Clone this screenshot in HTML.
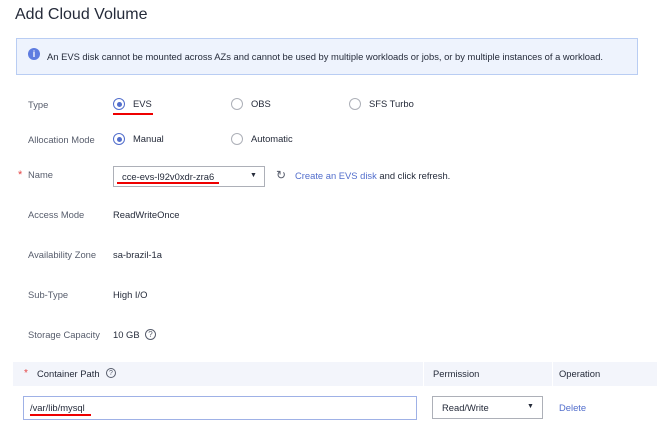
<!DOCTYPE html>
<html><head><style>
body{margin:0;width:657px;height:429px;background:#fff;font-family:"Liberation Sans",sans-serif;color:#252b3a;position:relative;overflow:hidden}
.a{position:absolute;white-space:nowrap}
.l{font-size:9.4px;color:#575d6c}
.v{font-size:9.4px;color:#252b3a}
.r{width:12px;height:12px;border:1px solid #adb0b8;border-radius:50%;box-sizing:border-box}
.rs{border-color:#526ecc}
.rs::after{content:"";position:absolute;left:2.5px;top:2.5px;width:5px;height:5px;border-radius:50%;background:#526ecc}
.red{background:#e00;height:2px}
</style></head><body>
<div class="a" style="left:15px;top:6px;font-size:16px;color:#252b3a">Add Cloud Volume</div>
<div class="a" style="left:16px;top:38px;width:622px;height:37px;background:#eef3fd;border:1px solid #b9cdf3;box-sizing:border-box"></div>
<div class="a" style="left:28px;top:48px;width:12px;height:12px;border-radius:50%;background:#5e7ce0;color:#fff;font-size:9px;font-weight:bold;text-align:center;line-height:12px">i</div>
<div class="a v" style="left:47px;top:51px;font-size:9.4px">An EVS disk cannot be mounted across AZs and cannot be used by multiple workloads or jobs, or by multiple instances of a workload.</div>

<div class="a l" style="left:28px;top:99px">Type</div>
<div class="a r rs" style="left:113px;top:98px"></div><div class="a v" style="left:133px;top:98px">EVS</div>
<div class="a red" style="left:113px;top:113px;width:40px"></div>
<div class="a r" style="left:231px;top:98px"></div><div class="a v" style="left:251px;top:98px">OBS</div>
<div class="a r" style="left:349px;top:98px"></div><div class="a v" style="left:369px;top:98px">SFS Turbo</div>

<div class="a l" style="left:28px;top:134px">Allocation Mode</div>
<div class="a r rs" style="left:113px;top:133px"></div><div class="a v" style="left:133px;top:133px">Manual</div>
<div class="a r" style="left:231px;top:133px"></div><div class="a v" style="left:251px;top:133px">Automatic</div>

<div class="a" style="left:18px;top:169px;color:#e54545;font-size:11px">*</div>
<div class="a l" style="left:28px;top:169px">Name</div>
<div class="a" style="left:113px;top:166px;width:152px;height:21px;border:1px solid #adb0b8;box-sizing:border-box"></div>
<div class="a v" style="left:122px;top:171px">cce-evs-l92v0xdr-zra6</div>
<div class="a red" style="left:117px;top:182px;width:102px"></div>
<div class="a" style="left:250px;top:172px;font-size:7px;color:#252b3a">▼</div>
<div class="a" style="left:276px;top:168px;font-size:12px;color:#575d6c">↻</div>
<div class="a v" style="left:295px;top:170px"><span style="color:#526ecc">Create an EVS disk</span> and click refresh.</div>

<div class="a l" style="left:28px;top:209px">Access Mode</div><div class="a v" style="left:113px;top:209px">ReadWriteOnce</div>
<div class="a l" style="left:28px;top:249px">Availability Zone</div><div class="a v" style="left:113px;top:249px">sa-brazil-1a</div>
<div class="a l" style="left:28px;top:289px">Sub-Type</div><div class="a v" style="left:113px;top:289px">High I/O</div>
<div class="a l" style="left:28px;top:329px">Storage Capacity</div><div class="a v" style="left:113px;top:329px">10 GB</div>
<div class="a" style="left:145px;top:329px;width:11px;height:11px;border:1px solid #575d6c;border-radius:50%;box-sizing:border-box;font-size:8px;text-align:center;line-height:10px;color:#575d6c">?</div>

<div class="a" style="left:13px;top:362px;width:644px;height:24px;background:#f3f5fb"></div>
<div class="a" style="top:362px;width:1px;height:24px;background:#fff;left:423px"></div>
<div class="a" style="left:552px;top:362px;width:1px;height:24px;background:#fff"></div>
<div class="a" style="left:24px;top:368px;color:#e54545;font-size:10px">*</div>
<div class="a l" style="left:37px;top:368px;color:#252b3a">Container Path</div>
<div class="a" style="left:106px;top:368px;width:10px;height:10px;border:1px solid #575d6c;border-radius:50%;box-sizing:border-box;font-size:7px;text-align:center;line-height:9px;color:#575d6c">?</div>
<div class="a l" style="left:433px;top:368px;color:#252b3a">Permission</div>
<div class="a l" style="left:559px;top:368px;color:#252b3a">Operation</div>

<div class="a" style="left:23px;top:396px;width:394px;height:24px;border:1px solid #9fb1e6;box-sizing:border-box"></div>
<div class="a v" style="left:30px;top:402px">/var/lib/mysql</div>
<div class="a red" style="left:30px;top:414px;width:61px"></div>
<div class="a" style="left:432px;top:396px;width:111px;height:23px;border:1px solid #adb0b8;box-sizing:border-box"></div>
<div class="a v" style="left:442px;top:402px">Read/Write</div>
<div class="a" style="left:527px;top:403px;font-size:7px">▼</div>
<div class="a v" style="left:559px;top:402px;color:#526ecc">Delete</div>
</body></html>
